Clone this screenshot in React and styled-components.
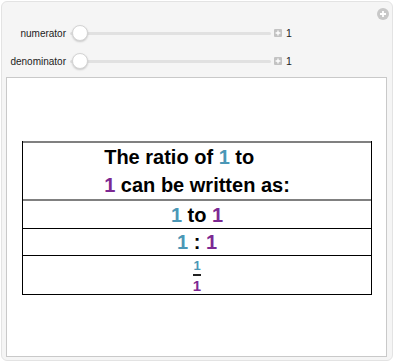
import React from 'react';
import styled, { createGlobalStyle } from 'styled-components';

const Global = createGlobalStyle`
  html, body { margin: 0; padding: 0; background: #fff; }
  body { font-family: "Liberation Sans", Arial, Helvetica, sans-serif; }
`;

const BLUE = '#4b97b6';
const PURPLE = '#7c2892';

const Page = styled.div`
  padding: 1px;
  width: 394px;
  height: 363px;
  box-sizing: border-box;
`;

const Panel = styled.div`
  position: relative;
  width: 392px;
  height: 360px;
  box-sizing: border-box;
  background: #f5f5f5;
  border: 1px solid #e3e3e3;
  border-radius: 6px;
  display: flex;
  flex-direction: column;
`;

const CornerButton = styled.div`
  position: absolute;
  top: 6px;
  right: 3px;
  width: 12px;
  height: 12px;
  border-radius: 50%;
  background: #c8c8c8;
  display: flex;
  align-items: center;
  justify-content: center;
`;

const Controls = styled.div`
  padding-top: 17px;
  display: flex;
  flex-direction: column;
`;

const SliderRow = styled.div`
  height: 28px;
  display: flex;
  align-items: center;
`;

const Label = styled.div`
  width: 64px;
  text-align: right;
  font-size: 10px;
  color: #222;
`;

const Track = styled.div`
  position: relative;
  margin-left: 4px;
  width: 201px;
  height: 3px;
  border-radius: 2px;
  background: #e1e1e1;
`;

const Thumb = styled.div`
  position: absolute;
  left: 2px;
  top: -7px;
  width: 16px;
  height: 16px;
  box-sizing: border-box;
  border-radius: 50%;
  background: #fff;
  border: 1px solid #d4d4d4;
  box-shadow: 0 1px 2px rgba(0, 0, 0, 0.18);
`;

const PlusBox = styled.div`
  margin-left: 3px;
  width: 8px;
  height: 8px;
  border-radius: 1px;
  background: #c3c3c3;
  display: flex;
  align-items: center;
  justify-content: center;
`;

const Value = styled.div`
  margin-left: 4px;
  font-size: 10.5px;
  color: #222;
`;

const Output = styled.div`
  margin: 2px 5px 0 4px;
  height: 280px;
  box-sizing: border-box;
  background: #fff;
  border: 1px solid #c9c9c9;
  padding: 63px 0 0 15px;
`;

const Table = styled.div`
  width: 350px;
  box-sizing: border-box;
  border-left: 1px solid #000;
  border-right: 1px solid #000;
  border-bottom: 1px solid #000;
`;

const HeaderCell = styled.div`
  height: 56px;
  border-top: 2px solid #808080;
  border-bottom: 2px solid #808080;
  display: flex;
  justify-content: center;
`;

const HeaderText = styled.div`
  display: inline-block;
  text-align: left;
  font-size: 20px;
  font-weight: bold;
  line-height: 28px;
  color: #000;
`;

const Cell = styled.div`
  height: ${p => p.$h}px;
  border-bottom: ${p => (p.$last ? 'none' : '1px solid #000')};
  display: flex;
  align-items: center;
  justify-content: center;
  font-size: 20px;
  font-weight: bold;
  line-height: 1;
  color: #000;
`;

const Num = styled.span`
  color: ${p => (p.$c === 'b' ? BLUE : PURPLE)};
`;

const Fraction = styled.div`
  display: flex;
  flex-direction: column;
  align-items: center;
  font-weight: bold;
  padding-top: 2px;
`;

const Numer = styled.div`
  font-size: 13px;
  line-height: 13px;
  color: ${BLUE};
`;

const Bar = styled.div`
  width: 8px;
  height: 2px;
  margin: 2px 0 3px;
  background: #222;
`;

const Denom = styled.div`
  font-size: 15px;
  line-height: 14px;
  color: ${PURPLE};
`;

const PlusIcon = ({ size, stroke }) => (
  <svg width={size} height={size} viewBox="0 0 10 10">
    <path d="M5 2v6M2 5h6" stroke="#fff" strokeWidth={stroke} />
  </svg>
);

const Slider = ({ label }) => (
  <SliderRow>
    <Label>{label}</Label>
    <Track>
      <Thumb />
    </Track>
    <PlusBox>
      <PlusIcon size={8} stroke={1.6} />
    </PlusBox>
    <Value>1</Value>
  </SliderRow>
);

export default function App() {
  return (
    <Page>
      <Global />
      <Panel>
        <CornerButton>
          <PlusIcon size={10} stroke={1.8} />
        </CornerButton>
        <Controls>
          <Slider label="numerator" />
          <Slider label="denominator" />
        </Controls>
        <Output>
          <Table>
            <HeaderCell>
              <HeaderText>
                The ratio of <Num $c="b">1</Num> to
                <br />
                <Num $c="p">1</Num> can be written as:
              </HeaderText>
            </HeaderCell>
            <Cell $h={27}>
              <Num $c="b">1</Num>&nbsp;to&nbsp;<Num $c="p">1</Num>
            </Cell>
            <Cell $h={26}>
              <Num $c="b">1</Num>&nbsp;:&nbsp;<Num $c="p">1</Num>
            </Cell>
            <Cell $h={38} $last>
              <Fraction>
                <Numer>1</Numer>
                <Bar />
                <Denom>1</Denom>
              </Fraction>
            </Cell>
          </Table>
        </Output>
      </Panel>
    </Page>
  );
}
